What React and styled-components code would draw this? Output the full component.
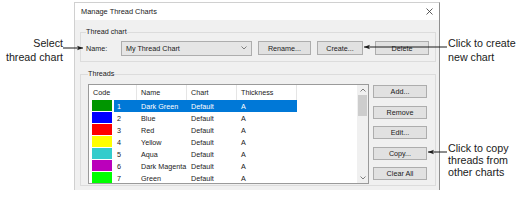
import React from "react";
import styled, { createGlobalStyle } from "styled-components";

const GlobalStyle = createGlobalStyle`
  html, body {
    margin: 0;
    padding: 0;
    background: #fff;
  }
  body {
    font-family: "Liberation Sans", Arial, sans-serif;
  }
`;

const Page = styled.div`
  position: relative;
  width: 529px;
  height: 205px;
  overflow: hidden;
  background: #fff;
  padding-top: 2px;
  box-sizing: border-box;
`;

const Dialog = styled.div`
  margin-left: 74px;
  width: 366px;
  box-sizing: border-box;
  border-left: 1px solid #d0d0d0;
  border-top: 1px solid #d0d0d0;
  border-right: 1px solid #8f8f8f;
  font-size: 7.2px;
  color: #1a1a1a;
`;

const TitleBar = styled.div`
  height: 17px;
  background: #fff;
  display: flex;
  align-items: center;
  justify-content: space-between;
  padding: 0 6px 0 6px;
  font-size: 7.4px;
`;

const Body = styled.div`
  background: #f0f0f0;
  padding: 0 3px 3px 5px;
  height: 170px;
  box-sizing: border-box;
  overflow: hidden;
`;

const Group = styled.fieldset`
  margin: 7px 0 0 0;
  border: 1px solid #dcdcdc;
  padding: ${(p) => p.$pad};
  min-width: 0;

  legend {
    padding: 0;
    line-height: 10px;
    font-size: 7.2px;
  }
`;

const ChartRow = styled.div`
  display: flex;
  align-items: center;
  height: 16px;
`;

const Label = styled.span`
  width: 35px;
`;

const Combo = styled.div`
  width: 131px;
  height: 15px;
  box-sizing: border-box;
  border: 1px solid #adadad;
  background: #e5e5e5;
  display: flex;
  align-items: center;
  justify-content: space-between;
  padding: 0 4px 0 4px;
`;

const Button = styled.div`
  width: ${(p) => p.$w || 54}px;
  height: ${(p) => p.$h || 14}px;
  margin-left: ${(p) => p.$ml || 0}px;
  box-sizing: border-box;
  border: 1px solid #adadad;
  background: #e1e1e1;
  display: flex;
  align-items: center;
  justify-content: center;
  flex-shrink: 0;
`;

const ThreadsRow = styled.div`
  display: flex;
  gap: 4px;
`;

const List = styled.div`
  width: 281px;
  height: 100px;
  box-sizing: border-box;
  border: 1px solid #9a9a9a;
  background: #fff;
  display: flex;
  overflow: hidden;
`;

const Table = styled.div`
  flex: 1;
  overflow: hidden;
`;

const Header = styled.div`
  display: flex;
  height: 15px;
`;

const HeadCell = styled.div`
  width: ${(p) => p.$w}px;
  box-sizing: border-box;
  border-right: 1px solid #e5e5e5;
  padding-left: 4px;
  display: flex;
  align-items: center;
`;

const Row = styled.div`
  display: flex;
  height: 12px;
`;

const Swatch = styled.div`
  width: 20px;
  height: 11px;
  margin: 0 2px 0 3px;
  background: ${(p) => p.$color};
`;

const RowBody = styled.div`
  display: flex;
  align-items: center;
  height: 12px;
  background: ${(p) => (p.$selected ? "#0078d7" : "transparent")};
  color: ${(p) => (p.$selected ? "#fff" : "#1a1a1a")};
`;

const Cell = styled.div`
  width: ${(p) => p.$w}px;
  padding-left: ${(p) => p.$pl || 4}px;
  box-sizing: border-box;
  white-space: nowrap;
`;

const ScrollBar = styled.div`
  width: 11px;
  background: #f0f0f0;
  display: flex;
  flex-direction: column;
  align-items: center;
`;

const ScrollArrow = styled.div`
  height: 10px;
  display: flex;
  align-items: center;
  justify-content: center;
`;

const Thumb = styled.div`
  width: 9px;
  height: 21px;
  background: #cdcdcd;
`;

const Spacer = styled.div`
  flex: 1;
`;

const SideButtons = styled.div`
  display: flex;
  flex-direction: column;
  gap: 7.5px;
  padding-top: 1px;
`;

const Callout = styled.div`
  position: absolute;
  top: ${(p) => p.$top}px;
  left: ${(p) => p.$left}px;
  width: ${(p) => p.$w}px;
  text-align: ${(p) => p.$align || "left"};
  font-size: 10.7px;
  line-height: ${(p) => p.$lh}px;
  color: #1a1a1a;
`;

const ArrowSvg = styled.svg`
  position: absolute;
  top: ${(p) => p.$top - 3}px;
  left: ${(p) => p.$left}px;
  overflow: visible;
`;

function Arrow({ top, left, width, dir }) {
  const head =
    dir === "right"
      ? `M${width} 3 L${width - 6} 0.8 L${width - 4.5} 3 L${width - 6} 5.2 Z`
      : `M0 3 L6 0.8 L4.5 3 L6 5.2 Z`;
  return (
    <ArrowSvg $top={top} $left={left} width={width} height={6}>
      <line x1={0} y1={3} x2={width} y2={3} stroke="#1a1a1a" strokeWidth="1" />
      <path d={head} fill="#1a1a1a" />
    </ArrowSvg>
  );
}

const Chevron = ({ up }) => (
  <svg width="6" height="4" viewBox="0 0 6 4">
    <polyline
      points={up ? "0.5,3.5 3,1 5.5,3.5" : "0.5,0.5 3,3 5.5,0.5"}
      fill="none"
      stroke="#707070"
      strokeWidth="0.9"
    />
  </svg>
);

const threads = [
  { id: 1, name: "Dark Green", color: "#009600" },
  { id: 2, name: "Blue", color: "#0000ff" },
  { id: 3, name: "Red", color: "#ff0000" },
  { id: 4, name: "Yellow", color: "#ffff00" },
  { id: 5, name: "Aqua", color: "#33cccc" },
  { id: 6, name: "Dark Magenta", color: "#bb00bb" },
  { id: 7, name: "Green", color: "#00ff00" },
];

export default function App() {
  return (
    <Page>
      <GlobalStyle />
      <Dialog>
        <TitleBar>
          <span>Manage Thread Charts</span>
          <svg width="7" height="7" viewBox="0 0 7 7">
            <path d="M0.5 0.5 L6.5 6.5 M6.5 0.5 L0.5 6.5" stroke="#333" strokeWidth="0.8" />
          </svg>
        </TitleBar>
        <Body>
          <Group $pad="3px 5px 5px 5px">
            <legend>Thread chart</legend>
            <ChartRow>
              <Label>Name:</Label>
              <Combo>
                <span>My Thread Chart</span>
                <Chevron />
              </Combo>
              <Button $w={53} $ml={6}>Rename...</Button>
              <Button $w={46} $ml={6}>Create...</Button>
              <Button $w={54} $ml={12}>Delete</Button>
            </ChartRow>
          </Group>
          <Group $pad="5px 8px 1px 7px">
            <legend>Threads</legend>
            <ThreadsRow>
              <List>
                <Table>
                  <Header>
                    <HeadCell $w={48}>Code</HeadCell>
                    <HeadCell $w={50}>Name</HeadCell>
                    <HeadCell $w={50}>Chart</HeadCell>
                    <HeadCell $w={60}>Thickness</HeadCell>
                  </Header>
                  {threads.map((t) => (
                    <Row key={t.id}>
                      <Swatch $color={t.color} />
                      <RowBody $selected={t.id === 1}>
                        <Cell $w={23} $pl={3}>{t.id}</Cell>
                        <Cell $w={50}>{t.name}</Cell>
                        <Cell $w={50}>Default</Cell>
                        <Cell $w={60}>A</Cell>
                      </RowBody>
                    </Row>
                  ))}
                </Table>
                <ScrollBar>
                  <ScrollArrow>
                    <Chevron up />
                  </ScrollArrow>
                  <Thumb />
                  <Spacer />
                  <ScrollArrow>
                    <Chevron />
                  </ScrollArrow>
                </ScrollBar>
              </List>
              <SideButtons>
                <Button $h={13}>Add...</Button>
                <Button $h={13}>Remove</Button>
                <Button $h={13}>Edit...</Button>
                <Button $h={13}>Copy...</Button>
                <Button $h={13}>Clear All</Button>
              </SideButtons>
            </ThreadsRow>
          </Group>
        </Body>
      </Dialog>

      <Callout $top={36} $left={2} $w={61} $align="right" $lh={14}>
        Select
        <br />
        thread chart
      </Callout>
      <Arrow top={48} left={63} width={20} dir="right" />

      <Callout $top={36} $left={448} $w={80} $lh={14}>
        Click to create
        <br />
        new chart
      </Callout>
      <Arrow top={47} left={364} width={83} dir="left" />

      <Callout $top={142} $left={448} $w={80} $lh={12}>
        Click to copy
        <br />
        threads from
        <br />
        other charts
      </Callout>
      <Arrow top={152} left={428} width={19} dir="left" />
    </Page>
  );
}
